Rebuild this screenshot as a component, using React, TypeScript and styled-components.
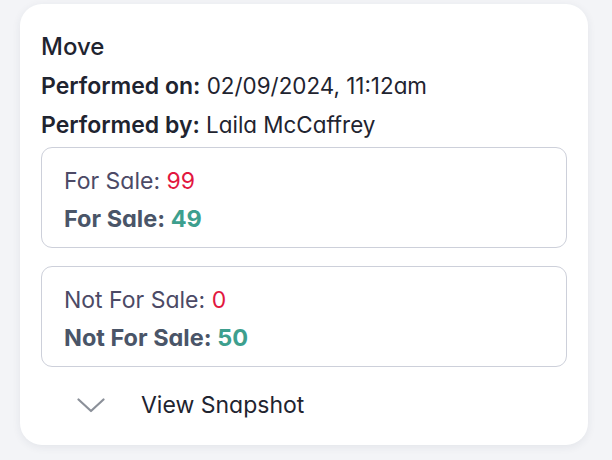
import React from "react";
import styled, { createGlobalStyle } from "styled-components";

const GlobalStyle = createGlobalStyle`
  html, body {
    margin: 0;
    padding: 0;
    background: #f3f4f7;
  }
  body {
    font-family: "Inter", "Noto Sans", sans-serif;
    font-feature-settings: "cv11";
  }
`;

const Page = styled.div`
  padding: 4px 24px 15px 20px;
`;

const Card = styled.div`
  width: 568px;
  height: 441px;
  box-sizing: border-box;
  background: #ffffff;
  border-radius: 22px;
  box-shadow: 0 2px 8px rgba(40, 50, 80, 0.08);
  padding: 23px 21px 21px 21px;
  display: flex;
  flex-direction: column;
`;

const Title = styled.div`
  font-size: 24px;
  line-height: 39px;
  font-weight: 500;
  color: #1f2430;
`;

const InfoLine = styled.div`
  font-size: 22.4px;
  line-height: 39px;
  height: 39px;
  color: #1f2430;
  b {
    font-weight: 600;
    font-size: 23px;
    line-height: 1;
  }
`;

const Boxes = styled.div`
  display: flex;
  flex-direction: column;
  gap: 18px;
  margin-top: 3px;
`;

const Box = styled.div`
  border: 1.5px solid #cdd0da;
  border-radius: 11px;
  padding: 14px 22px 8px 22px;
  height: 101px;
  box-sizing: border-box;
`;

const Row = styled.div<{ $bold?: boolean }>`
  font-size: ${(p) => (p.$bold ? 23.5 : 23)}px;
  line-height: 38px;
  height: 38px;
  font-weight: ${(p) => (p.$bold ? 750 : 400)};
  color: ${(p) => (p.$bold ? "#4a5568" : "#4c4a66")};
`;

const Num = styled.span<{ $tone: "red" | "teal" }>`
  color: ${(p) => (p.$tone === "red" ? "#e2173f" : "#3d9f8e")};
`;

const Toggle = styled.div`
  display: flex;
  align-items: center;
  gap: 36px;
  margin-top: 19px;
  padding-left: 36px;
  font-size: 23px;
  line-height: 38px;
  color: #1f2430;
`;

const Chevron = () => (
  <svg width="28" height="15" viewBox="0 0 28 15" fill="none">
    <path
      d="M1.5 1.5 L14 13 L26.5 1.5"
      stroke="#8b9099"
      strokeWidth="2.2"
      strokeLinecap="round"
      strokeLinejoin="round"
    />
  </svg>
);

export default function App() {
  return (
    <>
      <GlobalStyle />
      <Page>
        <Card>
          <Title>Move</Title>
          <InfoLine>
            <b>Performed on:</b> 02/09/2024, 11:12am
          </InfoLine>
          <InfoLine>
            <b>Performed by:</b> Laila McCaffrey
          </InfoLine>
          <Boxes>
            <Box>
              <Row>
                For Sale: <Num $tone="red">99</Num>
              </Row>
              <Row $bold>
                For Sale: <Num $tone="teal">49</Num>
              </Row>
            </Box>
            <Box>
              <Row>
                Not For Sale: <Num $tone="red">0</Num>
              </Row>
              <Row $bold>
                Not For Sale: <Num $tone="teal">50</Num>
              </Row>
            </Box>
          </Boxes>
          <Toggle>
            <Chevron />
            <span>View Snapshot</span>
          </Toggle>
        </Card>
      </Page>
    </>
  );
}
